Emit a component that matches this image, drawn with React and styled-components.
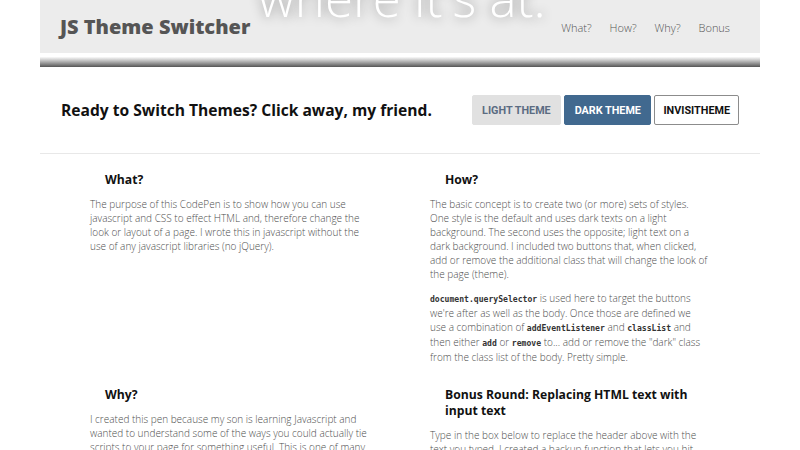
import styled, { createGlobalStyle } from "styled-components";

const GlobalStyle = createGlobalStyle`
  html, body {
    margin: 0;
    padding: 0;
    background: #fff;
  }
  body {
    font-family: "Open Sans", "DejaVu Sans", sans-serif;
    color: #555;
    overflow: hidden;
  }
`;

const Page = styled.div`
  width: 720px;
  margin: 0 auto;
  position: relative;
`;

const Header = styled.header`
  height: 53px;
  background: #ececec;
  display: flex;
  align-items: center;
  justify-content: space-between;
  padding: 0 30px 0 20px;
`;

const Title = styled.h1`
  margin: 0;
  font-size: 20px;
  font-weight: 800;
  color: #555;
`;

const Tagline = styled.div`
  position: absolute;
  top: -31px;
  left: 218px;
  font-size: 51px;
  line-height: 56px;
  font-weight: 300;
  color: #fff;
  white-space: nowrap;
  text-shadow: 0 0 12px rgba(0, 0, 0, 0.45);
  pointer-events: none;
`;

const Nav = styled.nav`
  display: flex;
  gap: 18px;
  padding-top: 2px;
`;

const NavLink = styled.a`
  font-size: 11px;
  font-weight: 300;
  color: #555;
  text-decoration: none;
`;

const Rule = styled.div`
  margin-top: 4px;
  height: 10px;
  background: linear-gradient(#fafafa 0%, #c4c4c4 35%, #8a8a8a 70%, #555 100%);
`;

const ThemeBar = styled.section`
  display: flex;
  align-items: center;
  justify-content: space-between;
  padding: 0 21px;
  height: 86px;
  border-bottom: 1px solid #e8e8e8;
`;

const Prompt = styled.h2`
  margin: 0;
  font-size: 15.6px;
  font-weight: 700;
  color: #111;
  white-space: nowrap;
`;

const Buttons = styled.div`
  display: flex;
  gap: 3px;
  flex-shrink: 0;
`;

const variants = {
  light: "background: #e1e1e1; color: #5b6c82; border-color: #e1e1e1;",
  dark: "background: #41698f; color: #fff; border-color: #41698f;",
  invisible: "background: #fff; color: #111; border-color: #8c8c8c;",
};

const ThemeButton = styled.button`
  font-family: Roboto, "Liberation Sans", Arial, sans-serif;
  font-size: 10.8px;
  font-weight: 700;
  height: 30px;
  padding: 0 ${(p) => (p.$variant === "invisible" ? 8 : 9.5)}px;
  border: 1px solid;
  border-radius: 2px;
  white-space: nowrap;
  cursor: pointer;
  ${(p) => variants[p.$variant]}
`;

const Content = styled.main`
  display: grid;
  grid-template-columns: 278px 278px;
  column-gap: 62px;
  row-gap: 13px;
  padding: 18px 0 0 50px;
`;

const Card = styled.section``;

const CardTitle = styled.h3`
  margin: 0 0 9px 15px;
  font-size: 12.2px;
  line-height: 16px;
  font-weight: 700;
  color: #111;
`;

const Text = styled.p`
  margin: 0 0 10px;
  font-size: 10px;
  line-height: 14px;
  font-weight: 300;
  color: #4e4e4e;
`;

const Code = styled.code`
  font-family: "DejaVu Sans Mono", monospace;
  font-size: 8.1px;
  font-weight: 700;
  color: #333;
`;

export default function App() {
  return (
    <>
      <GlobalStyle />
      <Page>
        <Header>
          <Title>JS Theme Switcher</Title>
          <Nav>
            <NavLink href="#what">What?</NavLink>
            <NavLink href="#how">How?</NavLink>
            <NavLink href="#why">Why?</NavLink>
            <NavLink href="#bonus">Bonus</NavLink>
          </Nav>
        </Header>
        <Tagline>where it's at.</Tagline>
        <Rule />

        <ThemeBar>
          <Prompt>Ready to Switch Themes? Click away, my friend.</Prompt>
          <Buttons>
            <ThemeButton $variant="light">LIGHT THEME</ThemeButton>
            <ThemeButton $variant="dark">DARK THEME</ThemeButton>
            <ThemeButton $variant="invisible">INVISITHEME</ThemeButton>
          </Buttons>
        </ThemeBar>

        <Content>
          <Card id="what">
            <CardTitle>What?</CardTitle>
            <Text>
              The purpose of this CodePen is to show how you can use javascript
              and CSS to effect HTML and, therefore change the look or layout of
              a page. I wrote this in javascript without the use of any
              javascript libraries (no jQuery).
            </Text>
          </Card>
          <Card id="how">
            <CardTitle>How?</CardTitle>
            <Text>
              The basic concept is to create two (or more) sets of styles. One
              style is the default and uses dark texts on a light background. The
              second uses the opposite; light text on a dark background. I
              included two buttons that, when clicked, add or remove the
              additional class that will change the look of the page (theme).
            </Text>
            <Text>
              <Code>document.querySelector</Code> is used here to target the
              buttons we're after as well as the body. Once those are defined we
              use a combination of <Code>addEventListener</Code> and{" "}
              <Code>classList</Code> and then either <Code>add</Code> or{" "}
              <Code>remove</Code> to... add or remove the "dark" class from the
              class list of the body. Pretty simple.
            </Text>
          </Card>
          <Card id="why">
            <CardTitle>Why?</CardTitle>
            <Text>
              I created this pen because my son is learning Javascript and wanted
              to understand some of the ways you could actually tie scripts to
              your page for something useful. This is one of many ways to make a
              page a little more interactive.
            </Text>
          </Card>
          <Card id="bonus">
            <CardTitle>Bonus Round: Replacing HTML text with input text</CardTitle>
            <Text>
              Type in the box below to replace the header above with the text you
              typed. I created a backup function that lets you hit enter to
              submit your new header text.
            </Text>
          </Card>
        </Content>
      </Page>
    </>
  );
}
